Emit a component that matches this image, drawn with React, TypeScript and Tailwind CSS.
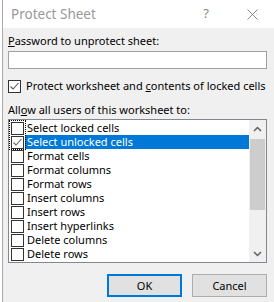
import React from "react";

const items = [
  { label: "Select locked cells", checked: false },
  { label: "Select unlocked cells", checked: true },
  { label: "Format cells", checked: false },
  { label: "Format columns", checked: false },
  { label: "Format rows", checked: false },
  { label: "Insert columns", checked: false },
  { label: "Insert rows", checked: false },
  { label: "Insert hyperlinks", checked: false },
  { label: "Delete columns", checked: false },
  { label: "Delete rows", checked: false },
];

function Check({ checked, light }: { checked?: boolean; light?: boolean }) {
  return (
    <span className="w-[13px] h-[13px] shrink-0 border border-[#333] bg-white flex items-center justify-center">
      {checked && (
        <svg width="11" height="11" viewBox="0 0 11 11">
          <path d="M1.5 5.5 L4 8 L9.5 2" fill="none" stroke={light ? "#666" : "#555"} strokeWidth="1.1" />
        </svg>
      )}
    </span>
  );
}

function Chevron({ up }: { up?: boolean }) {
  return (
    <svg width="9" height="6" viewBox="0 0 9 6">
      <path d={up ? "M1 5 L4.5 1.5 L8 5" : "M1 1 L4.5 4.5 L8 1"} fill="none" stroke="#606060" strokeWidth="1.5" />
    </svg>
  );
}

export default function App() {
  return (
    <div className="w-[274px] h-[302px] bg-white overflow-hidden text-[11px] text-black" style={{ fontFamily: '"Noto Sans", sans-serif' }}>
      <div className="ml-[2px] h-full border-l border-[#aaaaaa] flex flex-col">
        {/* title bar */}
        <div className="h-[28px] bg-white flex items-center shrink-0">
          <span className="ml-[8px] text-[13.5px] text-[#999999]">Protect Sheet</span>
          <span className="ml-auto text-[13px] text-[#888]">?</span>
          <svg className="ml-[38px] mr-[16px]" width="11" height="11" viewBox="0 0 11 11">
            <path d="M0.5 0.5 L10.5 10.5 M10.5 0.5 L0.5 10.5" stroke="#888" strokeWidth="1" />
          </svg>
        </div>

        <div className="flex-1 bg-[#f0f0f0] pl-[5px] pr-[7px] flex flex-col">
          <div className="mt-[5px] leading-[16px]">
            <span className="underline">P</span>assword to unprotect sheet:
          </div>
          <div className="mt-[2px] h-[18px] bg-white border border-[#a0a0a0]" />

          <div className="mt-[9px] h-[16px] flex items-center gap-[5px]">
            <Check checked />
            <span className="leading-[16px] whitespace-nowrap">
              Protect worksheet and <span className="underline">c</span>ontents of locked cells
            </span>
          </div>

          <div className="mt-[8px] leading-[16px]">
            All<span className="underline">o</span>w all users of this worksheet to:
          </div>

          <div className="mt-[1px] h-[144px] bg-white border border-[#828790] flex">
            <div className="relative flex-1 pt-[1px]">
              {/* focus rectangle */}
              <div className="absolute left-0 top-0 w-[17px] h-[30px] border border-dotted border-black pointer-events-none" />
              {items.map((it) => (
                <div key={it.label} className="h-[14px] flex items-center">
                  <div className="ml-[1px] w-[15px] h-[14px] flex items-center justify-center">
                    <Check checked={it.checked} light />
                  </div>
                  <div
                    className={
                      it.checked
                        ? "flex-1 h-[14px] pl-[2px] leading-[14px] bg-[#0078d7] text-white"
                        : "flex-1 h-[14px] pl-[2px] leading-[14px]"
                    }
                  >
                    {it.label}
                  </div>
                </div>
              ))}
            </div>
            <div className="w-[17px] bg-[#f0f0f0] flex flex-col">
              <div className="h-[17px] flex items-center justify-center">
                <Chevron up />
              </div>
              <div className="mt-[2px] mx-[1px] h-[71px] bg-[#cdcdcd]" />
              <div className="mt-auto h-[17px] flex items-center justify-center">
                <Chevron />
              </div>
            </div>
          </div>

          <div className="mt-[11px] flex justify-end gap-[10px]">
            <button className="w-[75px] h-[23px] bg-[#e1e1e1] border-2 border-[#0078d7] leading-none">OK</button>
            <button className="w-[75px] h-[23px] bg-[#e1e1e1] border border-[#adadad] leading-none">Cancel</button>
          </div>
        </div>
      </div>
    </div>
  );
}
